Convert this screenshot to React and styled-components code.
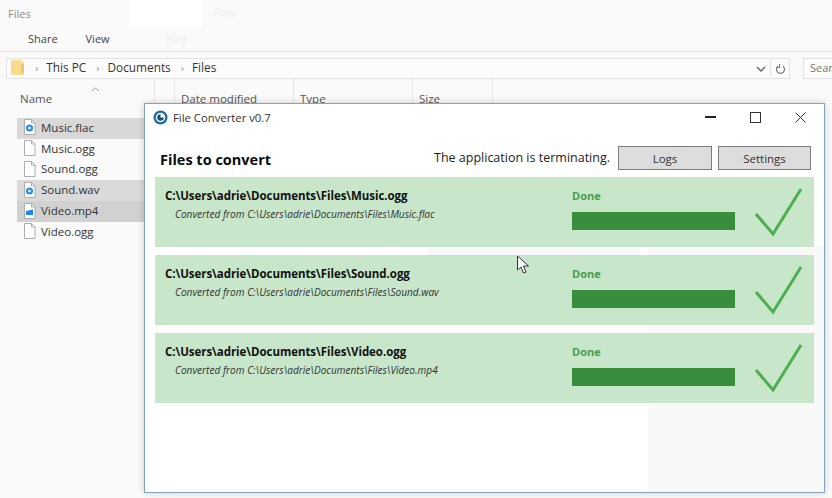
import React from "react";
import styled, { createGlobalStyle } from "styled-components";

const Global = createGlobalStyle`
  html, body {
    margin: 0;
    height: 100%;
    overflow: hidden;
    background: #fafafa;
  }
  body, button {
    font-family: "Open Sans", "Noto Sans", "Liberation Sans", sans-serif;
  }
`;

const Desktop = styled.div`
  position: relative;
  width: 832px;
  height: 498px;
  overflow: hidden;
  background: #fafafa;
  color: #222;
`;

const TitleBar = styled.div`
  height: 26px;
  display: flex;
  align-items: center;
  padding-left: 8px;
  font-size: 11px;
  color: #8a8a8a;
`;

const GhostTab = styled.div`
  width: 73px;
  height: 27px;
  margin-left: 98px;
  background: #fff;
`;

const GhostLabel = styled.span`
  margin-left: 12px;
  color: #f3f3f3;
  font-size: 10px;
  font-weight: 700;
`;

const Ribbon = styled.div`
  height: 25px;
  display: flex;
  align-items: center;
  padding-left: 28px;
  gap: 28px;
  font-size: 11px;
  color: #444;
  border-bottom: 1px solid #e4e4e4;
`;

const RibbonGhost = styled.span`
  margin-left: 28px;
  color: #f1f1f1;
  font-size: 10px;
  font-weight: 700;
`;

const AddressRow = styled.div`
  display: flex;
  align-items: stretch;
  gap: 13px;
  margin: 6px 0 0 6px;
  height: 21px;
`;

const AddressBar = styled.div`
  width: 784px;
  flex-shrink: 0;
  box-sizing: border-box;
  border: 1px solid #e2e2e2;
  background: #fcfcfc;
  display: flex;
  align-items: center;
  padding-left: 4px;
  font-size: 11.8px;
  color: #333;
  line-height: 17px;
  padding-bottom: 2px;
`;

const Crumb = styled.span`
  margin-left: 8px;
`;

const Chevron = styled.span`
  margin-left: 10px;
  color: #999;
  font-size: 11px;
`;

const AddressTools = styled.div`
  margin-left: auto;
  display: flex;
  align-items: center;
  height: 100%;
  margin-bottom: -2px;
`;

const ToolCell = styled.div`
  width: 19px;
  height: 100%;
  display: flex;
  align-items: center;
  justify-content: center;
  box-sizing: border-box;
  border-left: ${(p) => (p.$divided ? "1px solid #e2e2e2" : "none")};
`;

const SearchBox = styled.div`
  flex: 1;
  box-sizing: border-box;
  border: 1px solid #e2e2e2;
  border-right: none;
  background: #fdfdfd;
  padding: 1px 0 0 6px;
  font-size: 11px;
  color: #777;
  white-space: nowrap;
`;

const ColumnHeader = styled.div`
  display: flex;
  height: 39px;
  font-size: 11.5px;
  color: #555;
`;

const NameColumn = styled.div`
  position: relative;
  width: 155px;
  padding: 12px 0 0 20px;
  box-sizing: border-box;
  border-right: 1px solid #e6e6e6;
`;

const SortCaret = styled.svg`
  position: absolute;
  left: 91px;
  top: 8px;
`;

const OtherColumn = styled.div`
  width: ${(p) => p.$w}px;
  box-sizing: border-box;
  padding: 12px 0 0 6px;
  border-right: 1px solid #e6e6e6;
`;

const FileList = styled.div`
  display: flex;
  flex-direction: column;
  margin-left: 17px;
  width: 127px;
`;

const FileRow = styled.div`
  height: 20.8px;
  box-sizing: border-box;
  padding: 0 0 2px 6px;
  display: flex;
  align-items: center;
  gap: 5px;
  font-size: 11.5px;
  color: #333;
  background: ${(p) => p.$band || "transparent"};
`;

const AppWindow = styled.div`
  position: absolute;
  left: 144px;
  top: 103px;
  width: 681px;
  height: 390px;
  box-sizing: border-box;
  background: #fff;
  border: 1px solid #7fa6bd;
  box-shadow: 0 0 7px rgba(0, 0, 0, 0.18);
  display: flex;
  flex-direction: column;
`;

const GhostPatch = styled.div`
  position: absolute;
  left: 503px;
  right: 0;
  top: 142px;
  bottom: 0;
  background: #f8f8f8;
`;

const GhostBand = styled.div`
  position: absolute;
  left: 283px;
  width: 212px;
  top: 143px;
  height: 8px;
  background: #f8f8f8;
`;

const WindowTitle = styled.div`
  position: relative;
  height: 26px;
  display: flex;
  align-items: center;
  padding-left: 8px;
  gap: 5px;
  font-size: 11.3px;
  color: #333;
`;

const WindowButtons = styled.div`
  margin-left: auto;
  display: flex;
  align-items: center;
  gap: 34px;
  padding-right: 18px;
`;

const MinimizeBar = styled.div`
  width: 11px;
  height: 1.5px;
  background: #222;
`;

const Toolbar = styled.div`
  position: relative;
  display: flex;
  align-items: center;
  height: 24px;
  margin: 16px 13px 7px 15px;
`;

const Heading = styled.h1`
  margin: 3px 0 0;
  font-size: 14.5px;
  font-weight: 700;
  color: #0c0c0c;
`;

const Status = styled.span`
  margin-left: auto;
  margin-right: 8px;
  margin-top: -2px;
  font-size: 12.5px;
  color: #222;
`;

const ToolButton = styled.button`
  width: ${(p) => p.$w}px;
  height: 24px;
  margin-left: ${(p) => p.$gap || 0}px;
  padding: 1px 0 0;
  background: #dddddd;
  border: 1px solid #7d7d7d;
  font-size: 11.5px;
  color: #333;
`;

const Jobs = styled.div`
  position: relative;
  display: flex;
  flex-direction: column;
  gap: 8px;
  margin: 0 10px;
`;

const Job = styled.div`
  height: 70px;
  display: flex;
  background: #c8e6c9;
  box-sizing: border-box;
`;

const JobText = styled.div`
  width: 417px;
  padding: 11px 0 0 10px;
  margin-right: -10px;
`;

const JobPath = styled.div`
  font-size: 11.5px;
  font-weight: 700;
  color: #111;
  letter-spacing: -0.05px;
`;

const JobSource = styled.div`
  margin: 4px 0 0 10px;
  font-size: 10.1px;
  font-style: italic;
  color: #333;
`;

const JobProgress = styled.div`
  width: 163px;
  padding-top: 11px;
`;

const JobState = styled.div`
  font-size: 11px;
  font-weight: 700;
  color: #4a9d4e;
`;

const Track = styled.div`
  height: 18px;
  margin-top: 9px;
  background: #388e3c;
`;

const Check = styled.svg`
  margin: 10px 0 0 19px;
`;

const Pointer = styled.svg`
  position: absolute;
  left: 516px;
  top: 255px;
`;

const AppLogo = () => (
  <svg width="15" height="15" viewBox="0 0 16 16">
    <circle cx="8" cy="8" r="7.5" fill="#1d6f9b" />
    <circle cx="8" cy="8" r="5" fill="#fff" />
    <path d="M8 4.5a3.5 3.5 0 1 0 3.5 3.5H8z" fill="#1b4f72" />
  </svg>
);

const FileIcon = ({ kind }) => (
  <svg width="13" height="16" viewBox="0 0 13 16">
    <path d="M1.5.5h7l3.5 3.5v11.5h-10.500z" fill="#fff" stroke="#adadad" />
    <path d="M8.500.5v3.500h3.500" fill="none" stroke="#adadad" />
    {kind === "audio" && (
      <>
        <circle cx="6.500" cy="9" r="3.600" fill="#2f8fe0" />
        <circle cx="6.500" cy="9" r="1.300" fill="#fff" />
      </>
    )}
    {kind === "video" && <path d="M3 8l7-1.500V12H3z" fill="#1e88e5" />}
  </svg>
);

const files = [
  { name: "Music.flac", kind: "audio", band: "#d8d8d8" },
  { name: "Music.ogg" },
  { name: "Sound.ogg" },
  { name: "Sound.wav", kind: "audio", band: "#dadada" },
  { name: "Video.mp4", kind: "video", band: "#d1d1d1" },
  { name: "Video.ogg" },
];

const jobs = [
  { out: "Music.ogg", src: "Music.flac" },
  { out: "Sound.ogg", src: "Sound.wav" },
  { out: "Video.ogg", src: "Video.mp4" },
];

const base = "C:\\Users\\adrie\\Documents\\Files\\";

export default function App() {
  return (
    <Desktop>
      <Global />
      <TitleBar>
        Files
        <GhostTab />
        <GhostLabel>Files</GhostLabel>
      </TitleBar>
      <Ribbon>
        <span>Share</span>
        <span>View</span>
        <RibbonGhost>Play</RibbonGhost>
      </Ribbon>
      <AddressRow>
        <AddressBar>
          <svg width="14" height="17" viewBox="0 0 14 17">
            <path d="M0 1h10l3 3v12H0z" fill="#f8dc8c" />
            <path d="M10 5h3v8l-3 3z" fill="#ecc968" />
          </svg>
          <Chevron>›</Chevron>
          <Crumb>This PC</Crumb>
          <Chevron>›</Chevron>
          <Crumb>Documents</Crumb>
          <Chevron>›</Chevron>
          <Crumb>Files</Crumb>
          <AddressTools>
            <ToolCell>
              <svg width="10" height="6" viewBox="0 0 10 6">
                <path d="M1 1l4 4 4-4" fill="none" stroke="#666" strokeWidth="1.400" />
              </svg>
            </ToolCell>
            <ToolCell $divided>
              <svg width="11" height="12" viewBox="0 0 11 12">
                <path d="M3 3.200a4 4 0 1 0 5 0" fill="none" stroke="#777" strokeWidth="1.200" />
                <path d="M4.500 1v3.500H1.500" fill="none" stroke="#777" strokeWidth="1" />
              </svg>
            </ToolCell>
          </AddressTools>
        </AddressBar>
        <SearchBox>Sear</SearchBox>
      </AddressRow>
      <ColumnHeader>
        <NameColumn>
          Name
          <SortCaret width="9" height="5" viewBox="0 0 9 5">
            <path d="M1 4l3.500-3L8 4" fill="none" stroke="#999" />
          </SortCaret>
        </NameColumn>
        <OtherColumn $w={20} />
        <OtherColumn $w={119}>Date modified</OtherColumn>
        <OtherColumn $w={119}>Type</OtherColumn>
        <OtherColumn $w={80}>Size</OtherColumn>
      </ColumnHeader>
      <FileList>
        {files.map((f) => (
          <FileRow key={f.name} $band={f.band}>
            <FileIcon kind={f.kind} />
            {f.name}
          </FileRow>
        ))}
      </FileList>

      <AppWindow>
        <GhostPatch />
        <GhostBand />
        <WindowTitle>
          <AppLogo />
          File Converter v0.7
          <WindowButtons>
            <MinimizeBar />
            <svg width="11" height="11" viewBox="0 0 11 11">
              <rect x=".5" y=".5" width="10" height="10" fill="none" stroke="#333" />
            </svg>
            <svg width="11" height="11" viewBox="0 0 11 11">
              <path d="M.5.5l10 10M10.500.5l-10 10" stroke="#333" />
            </svg>
          </WindowButtons>
        </WindowTitle>
        <Toolbar>
          <Heading>Files to convert</Heading>
          <Status>The application is terminating.</Status>
          <ToolButton $w={94}>Logs</ToolButton>
          <ToolButton $w={93} $gap={6}>Settings</ToolButton>
        </Toolbar>
        <Jobs>
          {jobs.map((j) => (
            <Job key={j.out}>
              <JobText>
                <JobPath>{base + j.out}</JobPath>
                <JobSource>Converted from {base + j.src}</JobSource>
              </JobText>
              <JobProgress>
                <JobState>Done</JobState>
                <Track />
              </JobProgress>
              <Check width="50" height="50" viewBox="0 0 50 50">
                <path d="M2 27l17 20L47 2" fill="none" stroke="#4caf50" strokeWidth="3" />
              </Check>
            </Job>
          ))}
        </Jobs>
      </AppWindow>

      <Pointer width="14" height="20" viewBox="0 0 14 20">
        <path d="M1.500 1v14l3.500-3 2.500 6 2.500-1-2.500-6h5z" fill="#fff" stroke="#333" strokeWidth="1" />
      </Pointer>
    </Desktop>
  );
}
